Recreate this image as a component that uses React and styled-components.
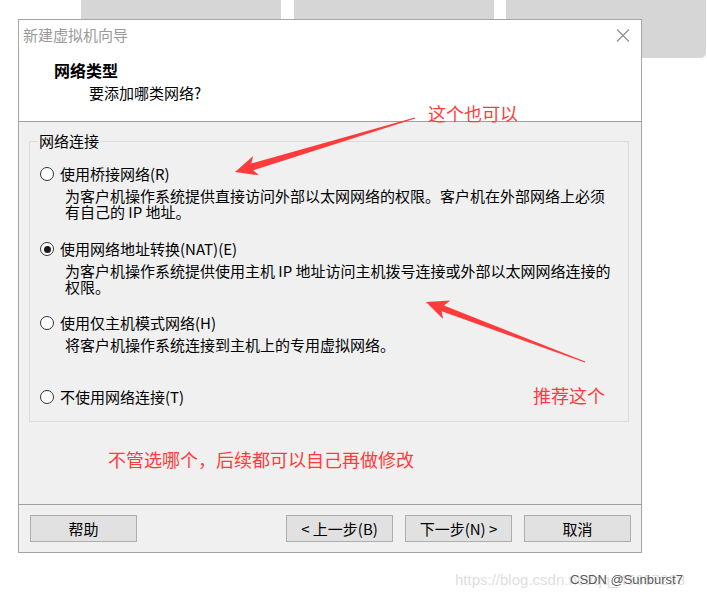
import styled, { createGlobalStyle } from "styled-components";

const GlobalStyle = createGlobalStyle`
  html, body {
    margin: 0;
    padding: 0;
    background: #fff;
  }
  body {
    font-family: "Noto Sans CJK SC", "Noto Sans", sans-serif;
  }
`;

const options = [
  {
    label: "使用桥接网络(R)",
    desc: "为客户机操作系统提供直接访问外部以太网网络的权限。客户机在外部网络上必须\n有自己的 IP 地址。",
    height: 75,
  },
  {
    label: "使用网络地址转换(NAT)(E)",
    desc: "为客户机操作系统提供使用主机 IP 地址访问主机拨号连接或外部以太网网络连接的\n权限。",
    height: 74,
    checked: true,
  },
  {
    label: "使用仅主机模式网络(H)",
    desc: "将客户机操作系统连接到主机上的专用虚拟网络。",
    height: 74,
  },
  { label: "不使用网络连接(T)" },
];

export default function App() {
  return (
    <Page>
      <GlobalStyle />
      <Backdrop>
        <Tab />
        <Tab />
        <Tab />
      </Backdrop>

      <Window>
        <TitleBar>
          <span>新建虚拟机向导</span>
          <svg width="14" height="13" viewBox="0 0 14 13">
            <path d="M1 0.5 L13 12.5 M13 0.5 L1 12.5" stroke="#8c8c8c" strokeWidth="1.1" />
          </svg>
        </TitleBar>

        <Header>
          <HeaderTitle>网络类型</HeaderTitle>
          <HeaderSub>要添加哪类网络?</HeaderSub>
        </Header>

        <Body>
          <Group>
            <Legend>网络连接</Legend>
            <OptionList>
              {options.map((o) => (
                <Option key={o.label} $height={o.height}>
                  <Radio $checked={o.checked} />
                  <OptionLabel>{o.label}</OptionLabel>
                  {o.desc && <OptionDesc>{o.desc}</OptionDesc>}
                </Option>
              ))}
            </OptionList>
          </Group>
        </Body>

        <Footer>
          <Button>帮助</Button>
          <NavButtons>
            <Button>&lt; 上一步(B)</Button>
            <Button>下一步(N) &gt;</Button>
            <Button>取消</Button>
          </NavButtons>
        </Footer>
      </Window>

      <Arrows width="707" height="597" viewBox="0 0 707 597">
        <polygon
          fill="#ff3b3b"
          points="235,172 259,175.3 253.3,170.3 415.2,118.6 414.8,117.4 251.3,163.5 253.2,156.1"
        />
        <polygon
          fill="#ff3b3b"
          points="426,302 443,319.1 441.7,311.2 584.8,362.6 585.2,361.4 443.9,305.6 450.2,300.4"
        />
      </Arrows>
      <Note $x={428} $y={104}>这个也可以</Note>
      <Note $x={533} $y={386}>推荐这个</Note>
      <Note $x={108} $y={450}>不管选哪个，后续都可以自己再做修改</Note>

      <WatermarkUrl>https://blog.csdn.net/qq_45357238</WatermarkUrl>
      <WatermarkName>CSDN @Sunburst7</WatermarkName>
    </Page>
  );
}

const Page = styled.div`
  position: relative;
  width: 707px;
  height: 597px;
  overflow: hidden;
  background: #fff;
`;

const Backdrop = styled.div`
  display: flex;
  gap: 12.5px;
  padding-left: 81px;
`;

const Tab = styled.div`
  width: 200px;
  height: 58px;
  background: #d6d6d6;
  border-radius: 0 0 5px 0;
`;

const Window = styled.div`
  position: absolute;
  left: 18px;
  top: 19px;
  width: 624px;
  height: 534px;
  box-sizing: border-box;
  border: 1px solid #a5a5a5;
  background: #f0f0f0;
  display: flex;
  flex-direction: column;
`;

const TitleBar = styled.div`
  height: 30px;
  flex: none;
  display: flex;
  align-items: center;
  justify-content: space-between;
  padding: 0 11px 0 4px;
  background: #fff;
  color: #9a9a9a;
  font-size: 15px;
  line-height: 30px;
`;

const Header = styled.div`
  flex: none;
  background: #fff;
  padding: 12px 0 20px 35px;
  border-bottom: 1px solid #a0a0a0;
`;

const HeaderTitle = styled.div`
  font-size: 16px;
  line-height: 16px;
  font-weight: bold;
  color: #000;
`;

const HeaderSub = styled.div`
  margin-top: 7px;
  padding-left: 35px;
  font-size: 15px;
  line-height: 16px;
  color: #000;
`;

const Body = styled.div`
  flex: 1;
  padding: 11px 12px 0 10px;
`;

const Group = styled.fieldset`
  margin: 0;
  padding: 0;
  min-width: 0;
  border: 1px solid #dcdcdc;
`;

const Legend = styled.legend`
  margin-left: 8px;
  padding: 0 1px;
  font-size: 15px;
  line-height: 16px;
  color: #000;
`;

const OptionList = styled.div`
  padding: 17px 0 16px 10px;
`;

const Option = styled.div`
  display: grid;
  grid-template-columns: 14px 1fr;
  column-gap: 6px;
  align-content: start;
  height: ${(p) => (p.$height ? `${p.$height}px` : "auto")};
`;

const Radio = styled.span`
  width: 14px;
  height: 14px;
  margin-top: 1px;
  box-sizing: border-box;
  border: 1px solid #333;
  border-radius: 50%;
  background: #fff;
  display: flex;
  align-items: center;
  justify-content: center;
  &::after {
    content: "";
    width: 7px;
    height: 7px;
    border-radius: 50%;
    background: ${(p) => (p.$checked ? "#1a1a1a" : "transparent")};
  }
`;

const OptionLabel = styled.div`
  font-size: 15px;
  line-height: 16px;
  color: #000;
  white-space: nowrap;
`;

const OptionDesc = styled.div`
  grid-column: 2;
  margin: 6px 0 0 5px;
  font-size: 15px;
  line-height: 16px;
  color: #000;
  white-space: pre-line;
`;

const Footer = styled.div`
  flex: none;
  display: flex;
  align-items: center;
  padding: 10px 10px 10px 11px;
  border-top: 1px solid #a0a0a0;
`;

const NavButtons = styled.div`
  margin-left: auto;
  display: flex;
  gap: 12px;
`;

const Button = styled.button`
  width: 107px;
  height: 27px;
  padding: 0;
  box-sizing: border-box;
  border: 1px solid #adadad;
  background: #e1e1e1;
  color: #000;
  font-family: "Noto Sans CJK SC", "Noto Sans", sans-serif;
  font-size: 15px;
  line-height: 25px;
`;

const Arrows = styled.svg`
  position: absolute;
  left: 0;
  top: 0;
  pointer-events: none;
`;

const Note = styled.div`
  position: absolute;
  left: ${(p) => p.$x}px;
  top: ${(p) => p.$y}px;
  color: #ff3b3b;
  font-size: 18px;
  line-height: 18px;
  white-space: nowrap;
`;

const WatermarkUrl = styled.div`
  position: absolute;
  left: 455px;
  top: 571px;
  color: #dedede;
  font-family: "Liberation Sans", Arial, sans-serif;
  font-size: 15px;
  line-height: 18px;
  white-space: nowrap;
`;

const WatermarkName = styled.div`
  position: absolute;
  left: 570px;
  top: 572px;
  color: #5a5a5a;
  font-family: "Liberation Sans", Arial, sans-serif;
  font-size: 13px;
  line-height: 16px;
  white-space: nowrap;
`;
